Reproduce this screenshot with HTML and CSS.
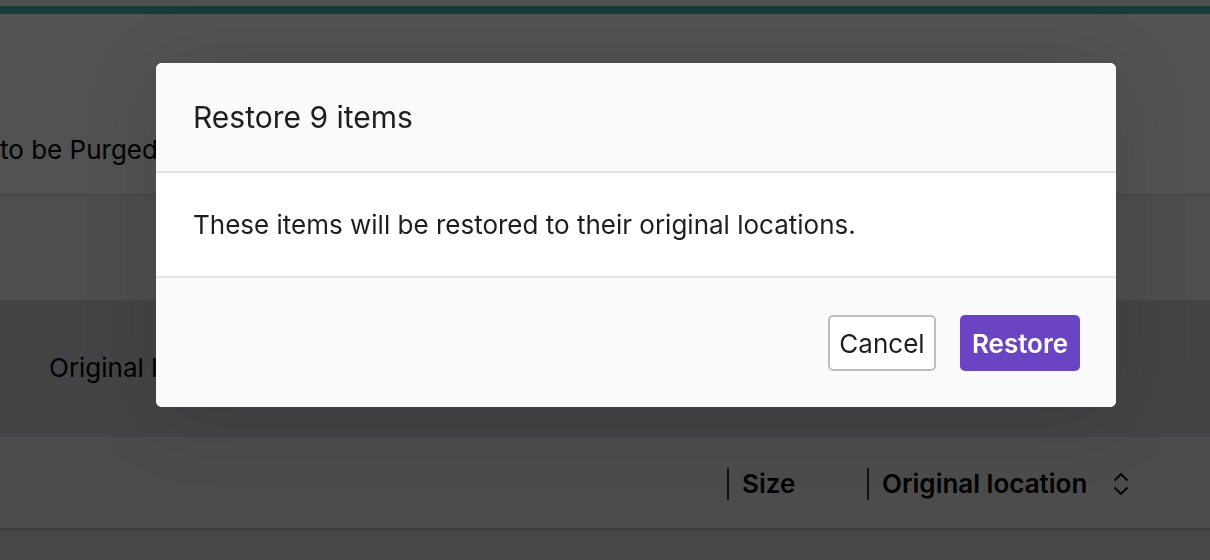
FILE: index.html
```html
<!DOCTYPE html>
<html lang="en">
<head>
<meta charset="utf-8">
<title>Restore items</title>
<link rel="stylesheet" href="styles.css">
</head>
<body>
<div class="page">
  <div class="topbar"></div>
  <div class="accent"></div>
  <div class="title-row"><h1 class="page-title">to be Purged</h1></div>
  <div class="toolbar"></div>
  <div class="filter-band"><span class="filter-label">Original location</span></div>
  <div class="table-head">
    <div class="th th-name"></div>
    <div class="th th-size">Size</div>
    <div class="th th-loc">Original location
      <svg class="sort" width="16" height="24" viewBox="0 0 16 24" aria-hidden="true">
        <path d="M1.5 8.5 L8 2 L14.5 8.5" fill="none" stroke="#000" stroke-width="1.8"/>
        <path d="M1.5 15.5 L8 22 L14.5 15.5" fill="none" stroke="#000" stroke-width="1.8"/>
      </svg>
    </div>
  </div>
  <div class="table-row"></div>
</div>
<div class="overlay"></div>
<div class="modal" role="dialog" aria-labelledby="mt">
  <div class="modal-header"><h2 id="mt" class="modal-title">Restore 9 items</h2></div>
  <div class="modal-body"><p class="modal-text">These items will be restored to their original locations.</p></div>
  <div class="modal-footer">
    <button class="btn btn-secondary">Cancel</button>
    <button class="btn btn-primary">Restore</button>
  </div>
</div>
</body>
</html>
```
FILE: styles.css
```css
html, body {
  margin: 0;
  padding: 0;
}
body {
  width: 1210px;
  height: 560px;
  overflow: hidden;
  font-family: Inter, "Noto Sans", sans-serif;
  color: #000;
  background: #fff;
}
.page {
  display: flex;
  flex-direction: column;
  height: 560px;
}
.topbar {
  height: 6px;
  background: #f7f7f7;
}
.accent {
  height: 8px;
  background: #44bdb6;
}
.title-row {
  height: 182px;
  border-bottom: 2px solid #dedede;
  display: flex;
  align-items: center;
  box-sizing: border-box;
  background: #fdfdfd;
}
.page-title {
  margin: 0;
  margin-top: 90px;
  font-size: 26px;
  font-weight: 400;
  color: #000;
}
.toolbar {
  height: 104px;
  background: #f3f3f3;
}
.filter-band {
  height: 137px;
  background: #d3d2da;
  display: flex;
  align-items: center;
  padding-left: 49px;
}
.filter-label {
  font-size: 26px;
  color: #000;
  margin-top: -2px;
}
.table-head {
  height: 91px;
  background: #ebebeb;
  border-bottom: 2px solid #bcbcbc;
  display: flex;
  align-items: center;
}
.th {
  font-size: 26px;
  font-weight: 600;
  color: #000;
  display: flex;
  align-items: center;
  height: 32px;
  margin-top: 2px;
}
.th-name {
  width: 727px;
}
.th-size {
  border-left: 2px solid #333;
  padding-left: 13px;
  box-sizing: border-box;
  width: 140px;
}
.th-loc {
  border-left: 2px solid #333;
  padding-left: 13px;
}
.sort {
  margin-left: 26px;
}
.table-row {
  flex: 1;
  background: #dedede;
}
.overlay {
  position: fixed;
  inset: 0;
  background: rgba(0, 0, 0, 0.68);
}
.modal {
  position: absolute;
  left: 156px;
  top: 63px;
  width: 960px;
  border-radius: 6px;
  overflow: hidden;
  background: #fff;
  box-shadow: 0 10px 80px rgba(0, 0, 0, 0.12);
}
.modal-header {
  height: 110px;
  box-sizing: border-box;
  background: #fafafa;
  border-bottom: 2px solid #e3e3e6;
  display: flex;
  align-items: center;
  padding: 0 37px;
}
.modal-title {
  margin: 0;
  margin-top: 0;
  font-size: 30px;
  font-weight: 400;
  color: #1e1e20;
}
.modal-body {
  height: 105px;
  box-sizing: border-box;
  border-bottom: 2px solid #e3e3e6;
  display: flex;
  align-items: center;
  padding: 0 37px;
}
.modal-text {
  margin: 0;
  font-size: 26px;
  color: #1e1e20;
}
.modal-footer {
  background: #fafafa;
  display: flex;
  justify-content: flex-end;
  gap: 24px;
  padding: 37px 36px 36px;
}
.btn {
  height: 56px;
  border-radius: 5px;
  font-family: Inter, "Noto Sans", sans-serif;
  font-size: 26px;
  cursor: pointer;
  box-sizing: border-box;
  padding: 0;
}
.btn-secondary {
  width: 108px;
  background: #fff;
  border: 2px solid #bdbdbf;
  color: #1e1e20;
  font-weight: 400;
}
.btn-primary {
  width: 120px;
  background: #6b44c4;
  border: none;
  color: #fff;
  font-weight: 600;
}
```
